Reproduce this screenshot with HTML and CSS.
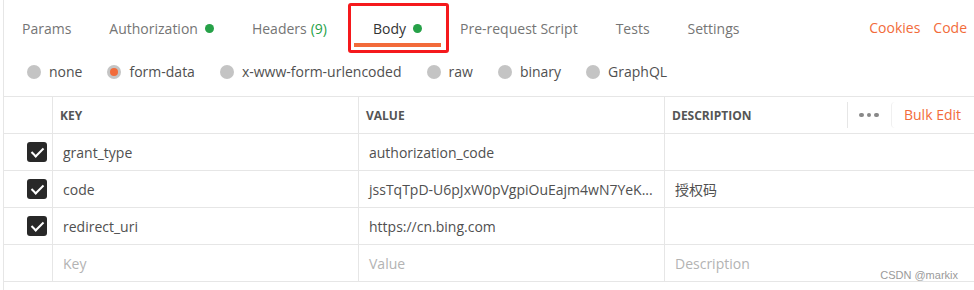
FILE: index.html
```html
<!DOCTYPE html>
<html lang="zh">
<head>
    <meta charset="UTF-8">
    <title>Body - form-data</title>
    <link rel="stylesheet" href="styles.css">
</head>
<body>
    <div class="panel">
        <div class="tab-bar">
            <div class="tab">Params</div>
            <div class="tab">Authorization <span class="dot"></span></div>
            <div class="tab">Headers <span class="count">(9)</span></div>
            <div class="tab active">Body <span class="dot"></span><span class="mark"></span></div>
            <div class="tab">Pre-request Script</div>
            <div class="tab">Tests</div>
            <div class="tab">Settings</div>
            <div class="links">
                <span>Cookies</span>
                <span>Code</span>
            </div>
        </div>

        <div class="body-types">
            <label class="type"><span class="radio"></span>none</label>
            <label class="type"><span class="radio checked"></span>form-data</label>
            <label class="type"><span class="radio"></span>x-www-form-urlencoded</label>
            <label class="type"><span class="radio"></span>raw</label>
            <label class="type"><span class="radio"></span>binary</label>
            <label class="type"><span class="radio"></span>GraphQL</label>
        </div>

        <div class="kv-table">
            <div class="row head">
                <div class="cell check"></div>
                <div class="cell">KEY</div>
                <div class="cell">VALUE</div>
                <div class="cell desc-head">
                    <span>DESCRIPTION</span>
                    <div class="tools">
                        <span class="more"><i></i><i></i><i></i></span>
                        <span class="bulk">Bulk Edit</span>
                    </div>
                </div>
            </div>
            <div class="row">
                <div class="cell check"><span class="box"></span></div>
                <div class="cell">grant_type</div>
                <div class="cell">authorization_code</div>
                <div class="cell"></div>
            </div>
            <div class="row">
                <div class="cell check"><span class="box"></span></div>
                <div class="cell">code</div>
                <div class="cell">jssTqTpD-U6pJxW0pVgpiOuEajm4wN7YeK...</div>
                <div class="cell">授权码</div>
            </div>
            <div class="row">
                <div class="cell check"><span class="box"></span></div>
                <div class="cell">redirect_uri</div>
                <div class="cell">https://cn.bing.com</div>
                <div class="cell"></div>
            </div>
            <div class="row empty">
                <div class="cell check"></div>
                <div class="cell">Key</div>
                <div class="cell">Value</div>
                <div class="cell">Description</div>
            </div>
        </div>

        <div class="watermark">CSDN @markix</div>
    </div>
</body>
</html>
```

FILE: styles.css
```css
body {
    margin: 0;
    background-color: #fff;
    font-family: "Open Sans", "Noto Sans CJK SC", sans-serif;
    font-size: 14px;
    color: #505050;
}
.panel {
    position: relative;
    margin-left: 3px;
    height: 290px;
    border-left: 1px solid #e6e6e6;
}

/* tabs */
.tab-bar {
    display: flex;
    align-items: flex-start;
    height: 56px;
}
.tab {
    position: relative;
    display: flex;
    align-items: center;
    height: 47px;
    box-sizing: border-box;
    padding: 14px 19px 0;
    line-height: 20px;
    color: #757575;
    border-bottom: 4px solid transparent;
    white-space: nowrap;
}
.tab:first-child {
    padding-left: 18px;
}
.tab.active {
    color: #333;
    border-bottom-color: #f26b3a;
}
.tab .dot {
    display: inline-block;
    width: 9px;
    height: 9px;
    margin-left: 7px;
    border-radius: 50%;
    background-color: #26a148;
}
.tab .count {
    margin-left: 4px;
    margin-right: 8px;
    color: #26a148;
}
.tab .mark {
    position: absolute;
    left: -6px;
    top: 3px;
    width: 101px;
    height: 50px;
    box-sizing: border-box;
    border: 3px solid #f5191c;
    border-radius: 3px;
}
.links {
    display: flex;
    gap: 13px;
    margin-left: auto;
    padding: 18px 7px 0 0;
    line-height: 20px;
    color: #f26b3a;
}

/* body type radios */
.body-types {
    display: flex;
    align-items: center;
    height: 31px;
    margin-bottom: 9px;
    padding-left: 23px;
}
.type {
    display: flex;
    align-items: center;
    margin-right: 25px;
    color: #505050;
}
.radio {
    position: relative;
    width: 14px;
    height: 14px;
    margin-right: 8px;
    border-radius: 50%;
    background-color: #c4c4c4;
}
.radio.checked::after {
    content: "";
    position: absolute;
    left: 3px;
    top: 3px;
    width: 8px;
    height: 8px;
    border-radius: 50%;
    background-color: #f26b3a;
}

/* key / value table */
.kv-table {
    border-top: 1px solid #e6e6e6;
}
.row {
    display: grid;
    grid-template-columns: 48px 306px 306px 1fr;
    height: 37px;
    box-sizing: border-box;
    border-bottom: 1px solid #e6e6e6;
}
.cell {
    display: flex;
    align-items: center;
    min-width: 0;
    padding: 0 10px;
    box-sizing: border-box;
    border-left: 1px solid #e6e6e6;
    white-space: nowrap;
    overflow: hidden;
}
.cell.check {
    justify-content: flex-end;
    padding: 0 5px 0 0;
    border-left: none;
}
.head .cell {
    padding: 0 7px;
    font-size: 12px;
    font-weight: bold;
    color: #555;
}
.head .cell.check {
    padding: 0;
}
.empty .cell {
    color: #b3b3b3;
}
.box {
    position: relative;
    width: 20px;
    height: 20px;
    border-radius: 3px;
    background-color: #282828;
}
.box::after {
    content: "";
    position: absolute;
    left: 7px;
    top: 3px;
    width: 5px;
    height: 10px;
    border: solid #fff;
    border-width: 0 2.5px 2.5px 0;
    transform: rotate(45deg);
}
.desc-head {
    justify-content: space-between;
}
.tools {
    display: flex;
    align-items: center;
    height: 26px;
    margin-right: 6px;
}
.more {
    display: flex;
    align-items: center;
    gap: 3px;
    height: 26px;
    padding: 0 12px 0 11px;
    border-left: 1px solid #e6e6e6;
}
.more i {
    width: 4.5px;
    height: 4.5px;
    border-radius: 50%;
    background-color: #888;
}
.bulk {
    padding-left: 12px;
    border-left: 1px solid #f0f0f0;
    border-radius: 4px;
    line-height: 26px;
    font-size: 14px;
    font-weight: normal;
    color: #f26b3a;
}

.watermark {
    position: absolute;
    right: 16px;
    bottom: 9px;
    font-family: "Liberation Sans", Arial, sans-serif;
    font-size: 11px;
    color: #9a9a9a;
}
```
